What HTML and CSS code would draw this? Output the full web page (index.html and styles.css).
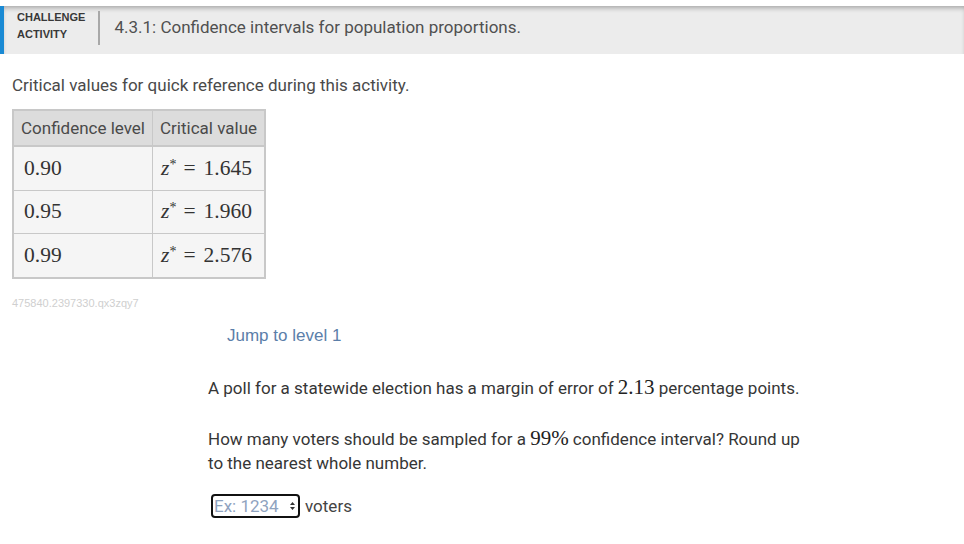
FILE: index.html
```html
<!DOCTYPE html>
<html>
<head>
<meta charset="utf-8">
<link rel="stylesheet" href="styles.css">
</head>
<body>
<div class="header">
  <div class="label">CHALLENGE<br>ACTIVITY</div>
  <div class="divider"></div>
  <div class="title">4.3.1: Confidence intervals for population proportions.</div>
</div>
<div class="content">
  <p class="intro">Critical values for quick reference during this activity.</p>
  <table class="crit">
    <thead>
      <tr><th>Confidence level</th><th>Critical value</th></tr>
    </thead>
    <tbody>
      <tr><td class="num">0.90</td><td class="num"><span class="z">z</span><sup>*</sup><span class="eq">=</span>1.645</td></tr>
      <tr><td class="num">0.95</td><td class="num"><span class="z">z</span><sup>*</sup><span class="eq">=</span>1.960</td></tr>
      <tr><td class="num">0.99</td><td class="num"><span class="z">z</span><sup>*</sup><span class="eq">=</span>2.576</td></tr>
    </tbody>
  </table>
  <div class="code">475840.2397330.qx3zqy7</div>
  <div class="jump">Jump to level 1</div>
  <div class="question">
    <p>A poll for a statewide election has a margin of error of <span class="m">2.13</span> percentage points.</p>
    <p>How many voters should be sampled for a <span class="m">99%</span> confidence interval? Round up<br>to the nearest whole number.</p>
    <div class="answer">
      <div class="input"><span class="ph">Ex: 1234</span><span class="spin"><svg width="7" height="12" viewBox="0 0 7 12"><path d="M1 5 L3.5 2 L6 5 Z M1 7 L3.5 10 L6 7 Z" fill="#333"/></svg></span></div>
      <span class="unit">voters</span>
    </div>
  </div>
</div>
</body>
</html>
```
FILE: styles.css
```css
html, body {
  margin: 0;
  padding: 0;
  background: #fff;
  font-family: Roboto, "Liberation Sans", sans-serif;
}
.header {
  margin-top: 6px;
  height: 48px;
  background: #ececec;
  border-left: 4px solid #1a8ad4;
  box-shadow: inset 0 4px 5px -2px rgba(0,0,0,0.3);
  display: flex;
  align-items: center;
}
.label {
  font-family: "Liberation Sans", Arial, sans-serif;
  font-weight: bold;
  font-size: 11px;
  line-height: 17px;
  color: #383838;
  margin-left: 13px;
  margin-top: -8px;
}
.divider {
  width: 2px;
  height: 34px;
  background: #a8a8a8;
  margin-left: 13px;
  margin-top: -4px;
}
.title {
  font-size: 17px;
  color: #505050;
  margin-left: 14px;
  margin-top: -6px;
}
.content {
  padding-left: 12px;
}
.intro {
  margin: 21px 0 0;
  font-size: 17px;
  line-height: 20px;
  color: #4a4a4a;
}
.crit {
  margin-top: 14px;
  border-collapse: collapse;
  border: 2px solid #c8c8c8;
}
.crit th {
  background: #dcdcdc;
  font-weight: normal;
  font-size: 17px;
  color: #4a4a4a;
  text-align: left;
  padding: 0 7px;
  height: 34px;
  border: 1px solid #c8c8c8;
  border-bottom: 2px solid #c8c8c8;
}
.crit td {
  background: #f5f5f5;
  border: 1px solid #c8c8c8;
  height: 42.5px;
  padding: 0 8px 0 10px;
}
.num {
  font-family: "Liberation Serif", "DejaVu Serif", serif;
  font-size: 21.5px;
  color: #333;
}
.crit td:last-child {
  padding-right: 9px;
  padding-left: 8px;
}
.z {
  font-style: italic;
}
.eq {
  margin: 0 8px 0 7px;
}
sup {
  font-size: 14px;
  vertical-align: 6px;
  line-height: 0;
}
.code {
  font-family: "Liberation Sans", Arial, sans-serif;
  font-size: 11px;
  color: #cfcfcf;
  margin-top: 18px;
}
.jump {
  font-family: "Liberation Sans", Arial, sans-serif;
  font-size: 17px;
  color: #5b7ea9;
  margin-left: 215px;
  margin-top: 17px;
}
.question {
  margin-left: 196px;
  width: 620px;
  font-size: 17px;
  line-height: 24px;
  color: #363636;
}
.question p {
  margin: 0;
  margin-top: 30px;
}
.question p + p {
  margin-top: 27px;
}
.m {
  font-family: "Liberation Serif", "DejaVu Serif", serif;
  font-size: 21px;
  line-height: 1;
  color: #222;
}
.answer {
  margin-top: 19px;
  display: flex;
  align-items: center;
}
.input {
  margin-left: 3px;
  width: 83px;
  height: 20px;
  border: 2px solid #111;
  border-radius: 4px;
  display: flex;
  align-items: center;
  justify-content: space-between;
  padding-right: 2px;
}
.ph {
  font-size: 17px;
  color: #8fa3bf;
  margin-left: 1px;
}
.spin {
  display: flex;
  align-items: center;
}
.unit {
  font-size: 17px;
  color: #444;
  margin-left: 5px;
}
```
